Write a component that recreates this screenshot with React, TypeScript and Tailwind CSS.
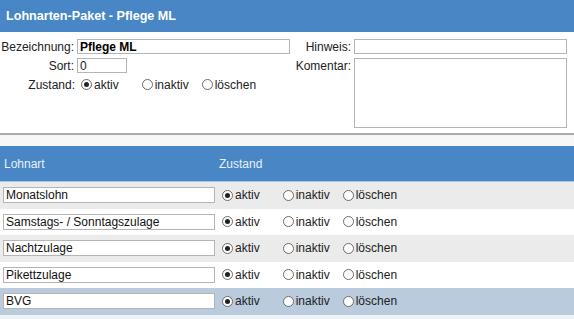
import React from 'react'

const font = { fontFamily: '"Liberation Sans", Arial, sans-serif' }

function Radio({ checked }: { checked?: boolean }) {
  return (
    <span className="inline-flex h-[11px] w-[11px] items-center justify-center rounded-full border border-[#6b6b6b] bg-white">
      {checked && <span className="h-[5px] w-[5px] rounded-full bg-[#222]" />}
    </span>
  )
}

function Zustand() {
  return (
    <div className="flex items-center text-[12px] text-[#222]">
      <span className="flex items-center gap-[2px]"><Radio checked />aktiv</span>
      <span className="ml-[23px] flex items-center gap-[2px]"><Radio />inaktiv</span>
      <span className="ml-[13px] flex items-center gap-[2px]"><Radio />löschen</span>
    </div>
  )
}

const rows = [
  { name: 'Monatslohn', bg: 'bg-[#ebebeb]' },
  { name: 'Samstags- / Sonntagszulage', bg: 'bg-white' },
  { name: 'Nachtzulage', bg: 'bg-[#ebebeb]' },
  { name: 'Pikettzulage', bg: 'bg-white' },
  { name: 'BVG', bg: 'bg-[#b9cbdd]' },
]

export default function App() {
  return (
    <div style={font} className="h-[319px] w-[574px] overflow-hidden bg-white text-[12px] text-[#222]">
      {/* title */}
      <div className="flex h-[32px] items-center bg-[#4886c6] pl-[6px] text-[12.6px] font-bold text-white">
        Lohnarten-Paket - Pflege ML
      </div>

      {/* form */}
      <div className="flex h-[101px] pt-[7px]">
        <div className="flex w-[290px] flex-col">
          <div className="flex h-[15px] items-center">
            <span className="w-[77px] pr-[3px] text-right">Bezeichnung:</span>
            <div className="flex h-[15px] flex-1 items-center border border-[#b5b5b5] pl-[2px] font-bold text-black">Pflege ML</div>
          </div>
          <div className="mt-[4px] flex h-[15px] items-center">
            <span className="w-[77px] pr-[3px] text-right">Sort:</span>
            <div className="flex h-[15px] w-[50px] items-center border border-[#b5b5b5] pl-[2px]">0</div>
          </div>
          <div className="mt-[4px] flex h-[15px] items-center">
            <span className="w-[81px] pr-[6px] text-right">Zustand:</span>
            <Zustand />
          </div>
        </div>
        <div className="flex flex-1 flex-col pr-[7px]">
          <div className="flex h-[15px] items-center">
            <span className="w-[64px] pr-[3px] text-right">Hinweis:</span>
            <div className="h-[15px] flex-1 border border-[#b5b5b5]" />
          </div>
          <div className="mt-[4px] flex">
            <span className="w-[64px] pr-[3px] text-right leading-[16px]">Komentar:</span>
            <div className="h-[70px] flex-1 border border-[#b5b5b5]" />
          </div>
        </div>
      </div>

      <div className="h-[2px] bg-[#a9a9a9]" />
      <div className="h-[11px] bg-[#f7f7f7]" />

      {/* table header */}
      <div className="flex h-[36px] items-center border-b border-[#a9c6e4] bg-[#4886c6] text-[12px] text-[#e8f0f8]">
        <span className="w-[219px] pl-[4px]">Lohnart</span>
        <span>Zustand</span>
      </div>

      {rows.map((r) => (
        <div key={r.name} className={`flex h-[26.5px] items-center ${r.bg}`}>
          <div className="ml-[3px] flex h-[16px] w-[212px] items-center border border-[#b5b5b5] bg-white pl-[2px] text-[12px] text-[#111]">
            {r.name}
          </div>
          <div className="ml-[7px]">
            <Zustand />
          </div>
        </div>
      ))}
      <div className="h-[6px] bg-[#eef3f8]" />
    </div>
  )
}
